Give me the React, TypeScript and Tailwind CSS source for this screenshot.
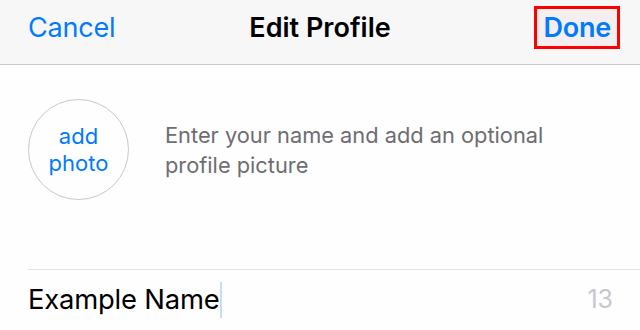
export default function App() {
  return (
    <div className="flex h-[330px] w-[640px] flex-col overflow-hidden bg-[#fefefe] font-['Inter','Liberation_Sans',sans-serif]">
      {/* Navigation bar */}
      <div className="flex h-[65px] shrink-0 border-b border-[#c8c7cc] bg-[#f7f7f7]">
        <div className="relative flex h-[54px] w-full items-center justify-between pl-[28px] pr-[20px]">
          <span className="text-[27px] leading-none tracking-[-0.2px] text-[#007aff]">Cancel</span>
          <span className="absolute left-1/2 -translate-x-1/2 text-[27px] font-semibold leading-none text-black">
            Edit Profile
          </span>
          <span className="border-[3px] border-[#ff0000] bg-[#f4eeee] px-[6px] py-[5px] text-[27px] font-semibold leading-none tracking-[-0.2px] text-[#007aff]">
            Done
          </span>
        </div>
      </div>

      {/* Photo + hint */}
      <div className="mt-[34px] flex items-center pl-[28px]">
        <div className="flex h-[101px] w-[101px] shrink-0 flex-col items-center justify-center rounded-full border border-[#c8c7cc] text-[22px] leading-[27px] text-[#007aff]">
          <span>add</span>
          <span>photo</span>
        </div>
        <p className="ml-[36px] text-[21.8px] leading-[30px] text-[#6d6d72]">
          Enter your name and add an optional
          <br />
          profile picture
        </p>
      </div>

      {/* Name field */}
      <div className="ml-[28px] mt-[69px] flex h-[60px] items-center border-t border-[#e3e3e6] pr-[27px]">
        <span className="text-[27.4px] leading-none tracking-[-0.2px] text-black">Example Name</span>
        <span className="ml-[1px] h-[36px] w-[2px] bg-[#c7dcf6]" />
        <span className="ml-auto text-[25px] leading-none text-[#c7c7cc]">13</span>
      </div>
    </div>
  );
}
